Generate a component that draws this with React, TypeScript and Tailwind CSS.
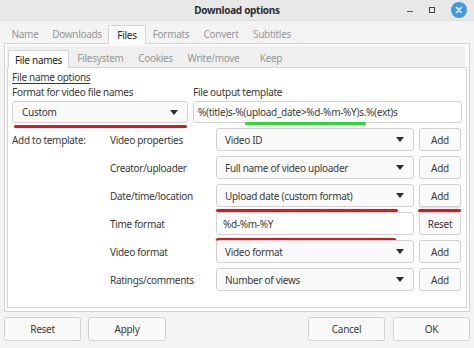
import clsx from 'clsx'

const OUTER_TABS = [
  { label: 'Name',      w: 'w-[42px]' },
  { label: 'Downloads', w: 'w-[62px]' },
  { label: 'Files',     w: 'w-[38px]', active: true },
  { label: 'Formats',   w: 'w-[50px]' },
  { label: 'Convert',   w: 'w-[50px]' },
  { label: 'Subtitles', w: 'w-[52px]' },
]

const INNER_TABS = [
  { label: 'File names', w: 'w-[61px]', active: true },
  { label: 'Filesystem', w: 'w-[63px]' },
  { label: 'Cookies',    w: 'w-[47px]' },
  { label: 'Write/move', w: 'w-[69px]' },
  { label: 'Keep',       w: 'w-[46px]' },
]

const ROWS = [
  { label: 'Video properties',   value: 'Video ID',                     button: 'Add' },
  { label: 'Creator/uploader',   value: 'Full name of video uploader',  button: 'Add' },
  { label: 'Date/time/location', value: 'Upload date (custom format)',  button: 'Add', marked: true },
  { label: 'Time format',        value: '%d-%m-%Y',                     button: 'Reset', input: true },
  { label: 'Video format',       value: 'Video format',                 button: 'Add' },
  { label: 'Ratings/comments',   value: 'Number of views',              button: 'Add' },
]

function Arrow() {
  return (
    <svg width="8" height="5" viewBox="0 0 8 5" className="shrink-0">
      <path d="M0 0 H8 L4 5 Z" fill="#2e2e2e" />
    </svg>
  )
}

function Combo({ value, className }: { value: string; className?: string }) {
  return (
    <div className={clsx(
      'h-full flex items-center justify-between pl-[8px] pr-[9px] rounded-[3px]',
      'border border-[#d2d2d2] bg-[#fafafa]',
      className,
    )}>
      <span>{value}</span>
      <Arrow />
    </div>
  )
}

function Button({ label, className }: { label: string; className?: string }) {
  return (
    <div className={clsx(
      'flex items-center justify-center rounded-[3px] border border-[#d2d2d2] bg-[#fafafa]',
      className,
    )}>
      {label}
    </div>
  )
}

export default function App() {
  return (
    <div className="w-[474px] h-[348px] flex flex-col bg-[#f3f3f3] text-[#3a3a3a] text-[10px] leading-[14px] tracking-[-0.3px] font-['Noto_Sans',sans-serif]">
      {/* Title bar */}
      <div className="h-[21px] grid grid-cols-[1fr_auto_1fr] items-center bg-[#e8e8e8] border-b border-[#dedede]">
        <div />
        <div className="font-bold text-[#2d2d2d]">Download options</div>
        <div className="flex items-center justify-end gap-[16px] pr-[7px]">
          <div className="w-[6px] h-[1.5px] bg-[#555] mt-[3px]" />
          <div className="w-[6px] h-[6px] border border-[#444] mb-[1px]" />
          <div className="w-[16px] h-[16px] rounded-full bg-[#3d98e6] flex items-center justify-center">
            <svg width="8" height="8" viewBox="0 0 8 8">
              <path d="M1.5 1.5 L6.5 6.5 M6.5 1.5 L1.5 6.5" stroke="#fff" strokeWidth="1.6" strokeLinecap="round" />
            </svg>
          </div>
        </div>
      </div>

      {/* Outer tabs */}
      <div className="h-[22px] flex items-end pl-[4px]">
        {OUTER_TABS.map(t => (
          <div
            key={t.label}
            className={clsx(
              'h-[19px] flex items-center justify-center',
              t.w,
              t.active
                ? 'bg-[#fbfbfb] border border-b-0 border-[#d4d4d4] rounded-t-[2px] text-[#262626] -mb-px relative z-10'
                : 'text-[#979797]',
            )}
          >
            {t.label}
          </div>
        ))}
      </div>

      {/* Outer panel */}
      <div className="mx-[4px] h-[269px] border border-[#d4d4d4] bg-[#fbfbfb] p-[2px] pb-[3px] flex flex-col">
        <div className="flex-1 flex flex-col">
          {/* Inner tab bar */}
          <div className="h-[21px] flex items-end pl-[1px] bg-[#efefef] mr-[2px]">
            {INNER_TABS.map(t => (
              <div
                key={t.label}
                className={clsx(
                  'h-[18px] flex items-center justify-center',
                  t.w,
                  t.active
                    ? 'bg-white border border-b-0 border-[#d4d4d4] text-[#262626] -mb-px relative z-10'
                    : 'text-[#979797]',
                )}
              >
                {t.label}
              </div>
            ))}
          </div>

          {/* Inner pane */}
          <div className="flex-1 border border-[#d4d4d4] bg-white pl-[4px] pt-[2px] flex flex-col">
            <div className="underline underline-offset-2">File name options</div>

            <div className="mt-[1px] flex">
              <div className="w-[181px]">Format for video file names</div>
              <div>File output template</div>
            </div>

            <div className="mt-[2px] h-[22px] flex gap-[5px]">
              <div className="relative w-[176px] h-full">
                <Combo value="Custom" className="pl-[9px] pr-[8px]" />
                <div className="absolute left-[2px] right-[1px] top-[24px] h-[3px] rounded-full bg-[#e8131a]" />
              </div>
              <div className="relative w-[269px] h-full flex items-center pl-[4px] rounded-[3px] border border-[#d2d2d2] bg-white">
                %(title)s-%(upload_date&gt;%d-%m-%Y)s.%(ext)s
                <div className="absolute left-[51px] w-[121px] top-[20px] h-[3px] rounded-full bg-[#22e12a]" />
              </div>
            </div>

            <div className="mt-[5px] flex flex-col gap-[5px]">
              {ROWS.map((r, i) => (
                <div key={r.label} className="h-[23px] flex items-center">
                  <div className="w-[98px]">{i === 0 ? 'Add to template:' : ''}</div>
                  <div className="w-[106px]">{r.label}</div>
                  <div className="relative w-[198px] h-full">
                    {r.input ? (
                      <div className="h-full flex items-center pl-[6px] rounded-[3px] border border-[#d2d2d2] bg-white">
                        {r.value}
                      </div>
                    ) : (
                      <Combo value={r.value} className="pl-[7px]" />
                    )}
                    {r.marked && (
                      <div className="absolute left-0 w-[182px] top-[25px] h-[3px] rounded-full bg-[#e8131a]" />
                    )}
                    {r.input && (
                      <div className="absolute left-0 w-[180px] top-[26px] h-[3px] rounded-full bg-[#e8131a]" />
                    )}
                  </div>
                  <div className="relative ml-[5px] w-[42px] h-full">
                    <Button
                      label={r.button}
                      className={clsx('h-full', r.marked && 'bg-[#f2f2f2] shadow-[0_1px_1px_rgba(0,0,0,0.12)]')}
                    />
                    {r.marked && (
                      <div className="absolute -left-px right-0 top-[25px] h-[3px] rounded-full bg-[#e8131a]" />
                    )}
                  </div>
                </div>
              ))}
            </div>
          </div>
        </div>
      </div>

      {/* Dialog buttons */}
      <div className="mt-[5px] h-[24px] flex px-[4px]">
        <Button label="Reset" className="w-[77px]" />
        <Button label="Apply" className="w-[78px] ml-[7px]" />
        <div className="flex-1" />
        <Button label="Cancel" className="w-[77px]" />
        <Button label="OK" className="w-[77px] ml-[8px]" />
      </div>
    </div>
  )
}
